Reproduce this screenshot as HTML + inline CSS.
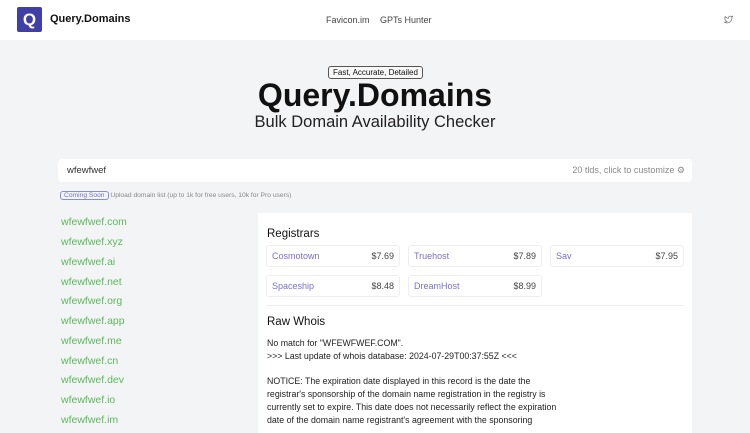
<!DOCTYPE html>
<html><head><meta charset="utf-8"><style>
*{box-sizing:border-box;margin:0;padding:0}
body{width:750px;height:422px;overflow:hidden;background:#f3f4f6;font-family:"Liberation Sans",sans-serif;color:#111;position:relative}
.hdr{position:absolute;left:0;top:0;width:750px;height:40px;background:#fff}
.logo{position:absolute;left:17px;top:7px;width:25px;height:25px;background:#3f3fa5;border-radius:2px;color:#fff;font-weight:bold;font-size:17px;text-align:center;line-height:25px}
.a{position:absolute;font-size:9px;color:#444}
.abs{position:absolute}
.badge{left:328px;top:66px;font-size:8px;border:1px solid #555;border-radius:3px;padding:1px 4px;background:#f8f8f8}
.search{left:58px;top:159px;width:634px;height:23px;background:#fff;border-radius:4px}
.panel{left:258px;top:213px;width:434px;height:220px;background:#fff}
.card{position:absolute;height:22px;border:1px solid #eee;border-radius:3px;font-size:9px;padding:0 5px;line-height:20px}
.card span{color:#7b6fd0}.card b{font-weight:normal;float:right;color:#444}
.dom{position:absolute;left:61px;font-size:10.5px;color:#5cb85c}
.w{position:absolute;left:267px;font-size:8.8px;color:#222;line-height:13px;white-space:nowrap}
</style></head><body>
<div class="hdr">
<div class="logo">Q</div>
<div class="abs" style="left:50px;top:13px;font-size:11px;font-weight:bold">Query.Domains</div>
<div class="a" style="left:326px;top:15px">Favicon.im</div>
<div class="a" style="left:380px;top:15px">GPTs Hunter</div>
<svg class="abs" style="left:724px;top:15px" width="9" height="9" viewBox="0 0 24 24" fill="none" stroke="#777" stroke-width="2"><path d="M23 3a10.9 10.9 0 0 1-3.140 1.53 4.48 4.48 0 0 0-7.860 3v1A10.66 10.66 0 0 1 3 4s-4 9 5 13a11.64 11.64 0 0 1-7 2c9 5 20 0 20-11.5a4.5 4.5 0 0 0-.08-.83A7.72 7.72 0 0 0 23 3z"/></svg>
</div>
<div class="abs badge">Fast, Accurate, Detailed</div>
<div class="abs" style="left:0;width:750px;text-align:center;top:77px;font-size:32px;font-weight:bold">Query.Domains</div>
<div class="abs" style="left:0;width:750px;text-align:center;top:113px;font-size:16.5px;color:#222">Bulk Domain Availability Checker</div>
<div class="abs search"><span class="abs" style="left:9px;top:6px;font-size:9.5px;color:#333">wfewfwef</span><span class="abs" style="right:7px;top:6px;font-size:9px;color:#888">20 tlds, click to customize ⚙</span></div>
<div class="abs" style="left:60px;top:192px;font-size:6.7px;color:#888"><span style="border:1px solid #8b8bd8;color:#7070c8;border-radius:3px;padding:0 3px">Coming Soon</span> Upload domain list (up to 1k for free users, 10k for Pro users)</div>
<div class="dom" style="top:216px">wfewfwef.com</div>
<div class="dom" style="top:236px">wfewfwef.xyz</div>
<div class="dom" style="top:256px">wfewfwef.ai</div>
<div class="dom" style="top:276px">wfewfwef.net</div>
<div class="dom" style="top:295px">wfewfwef.org</div>
<div class="dom" style="top:315px">wfewfwef.app</div>
<div class="dom" style="top:335px">wfewfwef.me</div>
<div class="dom" style="top:355px">wfewfwef.cn</div>
<div class="dom" style="top:374px">wfewfwef.dev</div>
<div class="dom" style="top:394px">wfewfwef.io</div>
<div class="dom" style="top:414px">wfewfwef.im</div>
<div class="abs panel"></div>
<div class="abs" style="left:267px;top:228px;font-size:11.5px">Registrars</div>
<div class="card" style="left:266px;top:245px;width:134px"><span>Cosmotown</span><b>$7.69</b></div>
<div class="card" style="left:408px;top:245px;width:134px"><span>Truehost</span><b>$7.89</b></div>
<div class="card" style="left:550px;top:245px;width:134px"><span>Sav</span><b>$7.95</b></div>
<div class="card" style="left:266px;top:275px;width:134px"><span>Spaceship</span><b>$8.48</b></div>
<div class="card" style="left:408px;top:275px;width:134px"><span>DreamHost</span><b>$8.99</b></div>
<div class="abs" style="left:266px;top:305px;width:418px;border-top:1px solid #eee"></div>
<div class="abs" style="left:267px;top:316px;font-size:11.5px">Raw Whois</div>
<div class="w" style="top:337px">No match for "WFEWFWEF.COM".<br>&gt;&gt;&gt; Last update of whois database: 2024-07-29T00:37:55Z &lt;&lt;&lt;</div>
<div class="w" style="top:375px">NOTICE: The expiration date displayed in this record is the date the<br>registrar's sponsorship of the domain name registration in the registry is<br>currently set to expire. This date does not necessarily reflect the expiration<br>date of the domain name registrant's agreement with the sponsoring</div>
</body></html>
